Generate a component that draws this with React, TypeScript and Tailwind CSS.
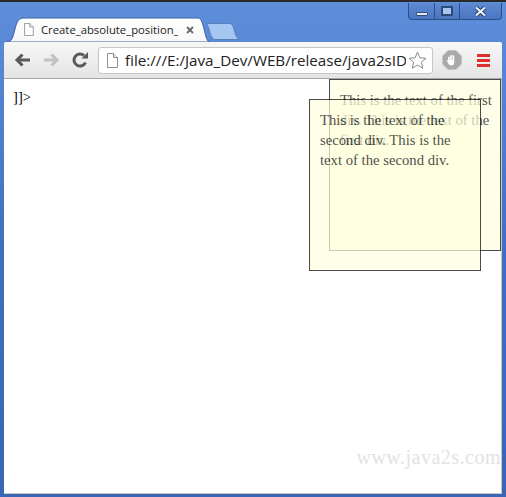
const sans = "font-['Open_Sans','Noto_Sans',sans-serif]";

function PageIcon({ className }: { className: string }) {
  return (
    <svg className={className} viewBox="0 0 12 15" fill="none">
      <path d="M1.500.5h6l4 4v10h-10z" fill="#fff" stroke="#8f8f8f" />
      <path d="M7.500.5v4h4" fill="#eee" stroke="#8f8f8f" />
    </svg>
  );
}

function TabBar() {
  return (
    <div className="flex h-[25px] items-stretch">
      <div className="relative ml-[3px] flex w-[203px] items-center pl-[16px]">
        <svg className="absolute inset-0 h-full w-full" viewBox="0 0 203 25" fill="none">
          <defs>
            <linearGradient id="tabfill" x1="0" y1="0" x2="0" y2="1">
              <stop offset="0" stopColor="#ffffff" />
              <stop offset="1" stopColor="#f7f7f7" />
            </linearGradient>
          </defs>
          <path d="M0 25C5 25 6 20 8 12 10 4 12 1 17 1H190c4 0 5 3 7 11 2 8 3 13 6 13z" fill="url(#tabfill)" stroke="#3c62a6" />
        </svg>
        <PageIcon className="relative h-[13px] w-[11px]" />
        <span className={`relative ml-[7px] w-[137px] overflow-hidden whitespace-nowrap text-[11.300px] leading-[16px] text-[#222] ${sans}`}>
          Create_absolute_position_
        </span>
        <svg className="relative ml-[8px] h-[8px] w-[8px]" viewBox="0 0 8 8">
          <path d="M1 1l6 6M7 1L1 7" stroke="#666" strokeWidth="1.800" />
        </svg>
      </div>
      <svg className="-ml-[4px] mt-[6px] h-[17px] w-[34px]" viewBox="0 0 34 17" fill="none">
        <path d="M1 .5H23c3 0 4 2 5 6 1 4 2 8 5 10H8C5 14 4 10 3 6 2 3 1 1 1 .5z" fill="#a6c6f2" stroke="#5b80bd" />
      </svg>
    </div>
  );
}

function Toolbar() {
  return (
    <div className="flex h-[37px] items-center rounded-t-[2px] border-b border-[#a8a8a8] bg-gradient-to-b from-[#f7f7f7] to-[#e4e4e4] pl-[10px]">
      <svg className="h-[16px] w-[17px]" viewBox="0 0 17 16" fill="none">
        <path d="M16 8H3M8.500 2.500L3 8l5.500 5.500" stroke="#595959" strokeWidth="3" />
      </svg>
      <svg className="ml-[12px] h-[16px] w-[17px]" viewBox="0 0 17 16" fill="none">
        <path d="M1 8h13M8.500 2.500L14 8l-5.500 5.500" stroke="#c2c2c2" strokeWidth="3" />
      </svg>
      <svg className="ml-[12px] h-[16px] w-[16px]" viewBox="0 0 16 16" fill="none">
        <path d="M13.500 10.500A6 6 0 1 1 12 3.500" stroke="#595959" strokeWidth="3" />
        <path d="M9.500 6.500H16V0z" fill="#595959" />
      </svg>
      <div className="ml-[10px] flex h-[27px] w-[335px] items-center overflow-hidden rounded-[3px] border border-[#c6c6c6] bg-white pl-[7px]">
        <PageIcon className="h-[15px] w-[12px] shrink-0" />
        <span className={`ml-[7px] w-[281px] shrink-0 overflow-hidden whitespace-nowrap text-[15.200px] leading-[20px] text-[#222] ${sans}`}>
          file:///E:/Java_Dev/WEB/release/java2sID
        </span>
        <svg className="ml-[2px] h-[18px] w-[19px] shrink-0" viewBox="0 0 19 18" fill="#fff">
          <path d="M9.500 1l2.400 5.800 6.100.5-4.700 4 1.500 6-5.300-3.300L4.200 17.300l1.500-6-4.700-4 6.100-.5z" stroke="#8a8a8a" />
        </svg>
      </div>
      <svg className="ml-[9px] h-[20px] w-[20px]" viewBox="0 0 20 20">
        <path d="M6 .5h8L19.500 6v8L14 19.500H6L.5 14V6z" fill="#a9a9a9" stroke="#c4c4c4" />
        <path d="M6 11V7h1.200v3h.4V5.500h1.300V10h.4V4.800h1.300V10h.4V5.500h1.300V12c0 2.500-1.300 3.500-3 3.500-1.500 0-2.400-.7-3-2L4.600 10.500c.5-.8 1.100-.4 1.400.5z" fill="#fff" />
      </svg>
      <div className="ml-[15px] flex w-[13px] flex-col gap-[2px]">
        <div className="h-[3px] bg-[#e0302b]" />
        <div className="h-[3px] bg-[#e0302b]" />
        <div className="h-[3px] bg-[#e0302b]" />
      </div>
    </div>
  );
}

function WindowButtons() {
  return (
    <div className="absolute right-[4px] top-[1px] flex h-[17px] overflow-hidden rounded-b-[4px] border border-t-0 border-[#2c4f86] bg-gradient-to-b from-[#5f8ad2] to-[#4a76c2]">
      <div className="flex w-[25px] items-end justify-center pb-[3px]">
        <div className="h-[4px] w-[12px] rounded-[1px] border border-[#2c4f86] bg-[#e6e6e6]" />
      </div>
      <div className="flex w-[25px] items-center justify-center border-l border-[#2c4f86]">
        <div className="h-[10px] w-[12px] rounded-[1px] border-2 border-[#2a4a7c] bg-[#a9c4ec]" />
      </div>
      <div className="flex w-[42px] items-center justify-center border-l border-[#2c4f86]">
        <svg className="h-[11px] w-[13px]" viewBox="0 0 13 11" fill="none">
          <path d="M2 1.500l9 8M11 1.500l-9 8" stroke="#2a4a7c" strokeWidth="4" />
          <path d="M2 1.500l9 8M11 1.500l-9 8" stroke="#f2f2f2" strokeWidth="2" />
        </svg>
      </div>
    </div>
  );
}

export default function App() {
  return (
    <div className="relative flex h-[497px] w-[506px] flex-col overflow-hidden border-t-[2px] border-[#2a2a2a] bg-gradient-to-b from-[#5f8fdb] via-[#3f6fbe] to-[#3a66b4] px-[4px] pb-[3px] pt-[15px]">
      <WindowButtons />
      <TabBar />
      <Toolbar />
      <div className="relative flex-1 border-r border-b border-[#c8c8c8] bg-white pl-[9px] pt-[8px] font-['Liberation_Serif',serif] text-[14.700px] leading-[20px] text-black">
        ]]&gt;
        <div className="absolute left-[325px] top-0 h-[172px] w-[172px] border border-black bg-[#ffffe0] pl-[10px] pr-[6px] pt-[10px] opacity-70">
          This is the text of the first div. This is the text of the first div.
        </div>
        <div className="absolute left-[305px] top-[20px] h-[172px] w-[172px] border border-black bg-[#ffffe0] pl-[10px] pr-[10px] pt-[10px] opacity-70">
          This is the text of the second div. This is the text of the second div.
        </div>
        <div className="absolute bottom-[24px] right-0 text-[20px] leading-[24px] tracking-[0.500px] text-[#e2e2e6]">www.java2s.com</div>
      </div>
    </div>
  );
}
